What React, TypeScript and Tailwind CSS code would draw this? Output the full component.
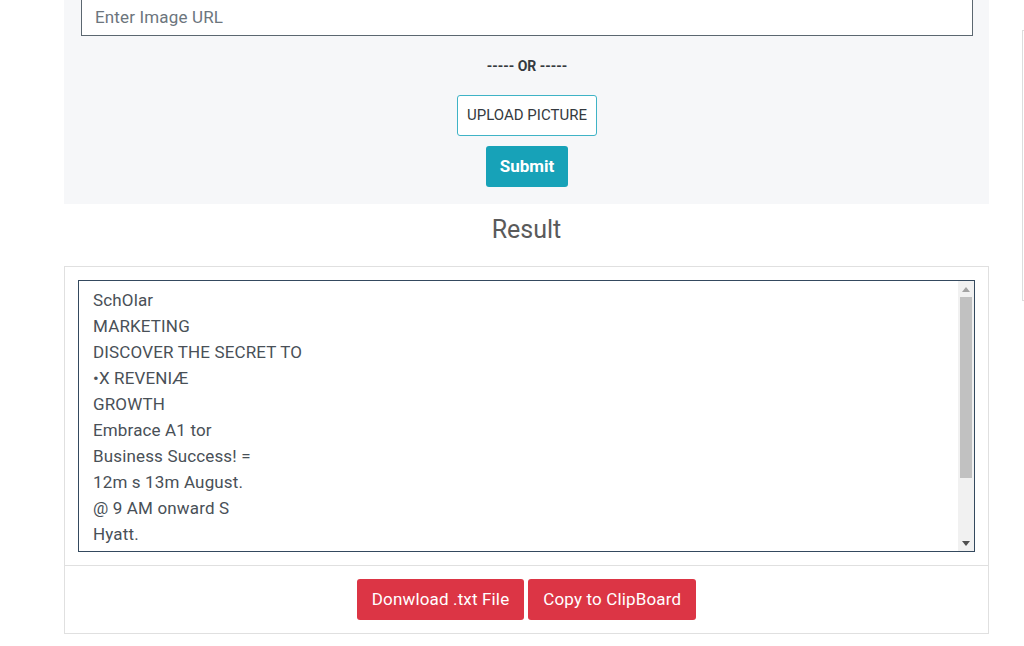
import { useState } from 'react'

const ocrText = `SchOlar
MARKETING
DISCOVER THE SECRET TO
•X REVENIÆ
GROWTH
Embrace A1 tor
Business Success! =
12m s 13m August.
@ 9 AM onward S
Hyatt.`

export default function App() {
  const [url, setUrl] = useState('')
  const [text, setText] = useState(ocrText)

  return (
    <div className="relative h-[646px] overflow-hidden bg-white text-[#212529]" style={{ fontFamily: 'Roboto, "Liberation Sans", sans-serif' }}>
      {/* Side box peeking in from the right */}
      <div className="absolute left-[1022px] top-[30px] h-[271px] w-[40px] border border-[#dcdcdc]"></div>

      <div className="ml-[64px] w-[925px]">
        {/* Input panel */}
        <div className="flex flex-col items-center bg-[#f6f7f9] pb-[17px] pl-[17px] pr-[16px]">
          <input
            value={url}
            onChange={(e) => setUrl(e.target.value)}
            placeholder="Enter Image URL"
            className="-mt-[3px] h-[39px] w-full border border-[#5b6770] bg-white px-[13px] text-[17px] tracking-[0.15px] text-[#495057] outline-none placeholder:text-[#6c757d]"
          />
          <p className="mt-[21px] text-[14px] font-bold leading-[18px] text-[#343a40]">----- OR -----</p>
          <button className="mt-[20px] h-[41px] rounded-[3px] border border-[#3fb3c6] bg-white px-[9px] text-[15px] text-[#343a40]">
            UPLOAD PICTURE
          </button>
          <button className="mt-[10px] h-[41px] rounded-[3px] bg-[#17a2b8] px-[14px] text-[17px] font-bold text-white">
            Submit
          </button>
        </div>

        <h2 className="mt-[11px] text-center text-[25px] leading-[30px] text-[#5a5a5a]">Result</h2>

        {/* Result card */}
        <div className="mt-[21px] border border-[#e0e0e0]">
          <div className="p-[13px]">
            <div className="relative">
              <textarea
                value={text}
                onChange={(e) => setText(e.target.value)}
                className="block h-[272px] w-full resize-none overflow-hidden border border-[#34495e] py-[6px] pl-[14px] pr-[30px] text-[17px] leading-[26px] tracking-[0.15px] text-[#495057] outline-none"
              />
              {/* scrollbar */}
              <div className="absolute bottom-[1px] right-[1px] top-[1px] flex w-[16px] flex-col bg-[#f1f1f1]">
                <div className="flex h-[16px] items-center justify-center">
                  <svg width="8" height="5" viewBox="0 0 8 5"><path d="M0 5 L4 0 L8 5 Z" fill="#a3a3a3" /></svg>
                </div>
                <div className="mx-[2px] h-[181px] bg-[#c1c1c1]"></div>
                <div className="flex-1"></div>
                <div className="flex h-[16px] items-center justify-center">
                  <svg width="8" height="5" viewBox="0 0 8 5"><path d="M0 0 L8 0 L4 5 Z" fill="#505050" /></svg>
                </div>
              </div>
            </div>
          </div>
          <div className="flex justify-center gap-[4px] border-t border-[#e0e0e0] py-[13px]">
            <button className="h-[41px] rounded-[3px] bg-[#dc3545] px-[15px] text-[17px] tracking-[0.15px] text-white">Donwload .txt File</button>
            <button className="h-[41px] rounded-[3px] bg-[#dc3545] px-[15px] text-[17px] tracking-[0.15px] text-white">Copy to ClipBoard</button>
          </div>
        </div>
      </div>
    </div>
  )
}
